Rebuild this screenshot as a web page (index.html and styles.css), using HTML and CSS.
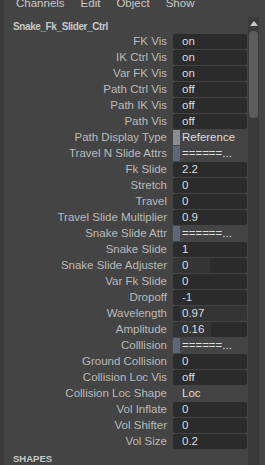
FILE: index.html
```html
<!DOCTYPE html>
<html lang="en">
<head>
<meta charset="UTF-8">
<title>Channel Box</title>
<link rel="stylesheet" href="styles.css">
</head>
<body>
<div class="window">
  <div class="edge"></div>
  <div class="main">
    <div class="menubar">
      <span>Channels</span>
      <span>Edit</span>
      <span>Object</span>
      <span>Show</span>
    </div>
    <div class="panel">
      <div class="content">
        <div class="node">Snake_Fk_Slider_Ctrl</div>
        <div class="attrs">
          <div class="row"><span class="label">FK Vis</span><span class="field">on</span></div>
          <div class="row"><span class="label">IK Ctrl Vis</span><span class="field">on</span></div>
          <div class="row"><span class="label">Var FK Vis</span><span class="field">on</span></div>
          <div class="row"><span class="label">Path Ctrl Vis</span><span class="field">off</span></div>
          <div class="row"><span class="label">Path IK Vis</span><span class="field">off</span></div>
          <div class="row"><span class="label">Path Vis</span><span class="field">off</span></div>
          <div class="row"><span class="label">Path Display Type</span><span class="enum"><i class="swatch gray"></i>Reference</span></div>
          <div class="row"><span class="label">Travel N Slide Attrs</span><span class="enum"><i class="swatch blue"></i>======...</span></div>
          <div class="row"><span class="label">Fk Slide</span><span class="field">2.2</span></div>
          <div class="row"><span class="label">Stretch</span><span class="field">0</span></div>
          <div class="row"><span class="label">Travel</span><span class="field">0</span></div>
          <div class="row"><span class="label">Travel Slide Multiplier</span><span class="field">0.9</span></div>
          <div class="row"><span class="label">Snake Slide Attr</span><span class="enum"><i class="swatch blue"></i>======...</span></div>
          <div class="row"><span class="label">Snake Slide</span><span class="field">1</span></div>
          <div class="row"><span class="label">Snake Slide Adjuster</span><span class="field"><span class="fill" style="left: 0; width: 37px"></span><span class="val">0</span></span></div>
          <div class="row"><span class="label">Var Fk Slide</span><span class="field">0</span></div>
          <div class="row"><span class="label">Dropoff</span><span class="field">-1</span></div>
          <div class="row"><span class="label">Wavelength</span><span class="field"><span class="fill" style="left: 7px; width: 67px"></span><span class="val">0.97</span></span></div>
          <div class="row"><span class="label">Amplitude</span><span class="field"><span class="fill" style="left: 0; width: 38px"></span><span class="val">0.16</span></span></div>
          <div class="row"><span class="label">Colllision</span><span class="enum"><i class="swatch blue"></i>======...</span></div>
          <div class="row"><span class="label">Ground Collision</span><span class="field">0</span></div>
          <div class="row"><span class="label">Collision Loc Vis</span><span class="field">off</span></div>
          <div class="row"><span class="label">Collision Loc Shape</span><span class="enum plain">Loc</span></div>
          <div class="row"><span class="label">Vol Inflate</span><span class="field">0</span></div>
          <div class="row"><span class="label">Vol Shifter</span><span class="field">0</span></div>
          <div class="row"><span class="label">Vol Size</span><span class="field">0.2</span></div>
        </div>
        <div class="section">SHAPES</div>
      </div>
      <div class="scrollbar">
        <div class="arrow"></div>
        <div class="thumb"></div>
      </div>
    </div>
  </div>
</div>
</body>
</html>
```

FILE: styles.css
```css
body {
  margin: 0;
  background-color: #444444;
  font-family: "Liberation Sans", Arial, sans-serif;
  overflow: hidden;
}

.window {
  display: flex;
  width: 265px;
  height: 465px;
  background-color: #444444;
}

.edge {
  width: 4px;
  background-color: #3a3a3a;
}

.main {
  flex: 1;
  display: flex;
  flex-direction: column;
}

.menubar {
  display: flex;
  gap: 16px;
  height: 17px;
  padding-left: 12px;
  font-size: 11.5px;
  line-height: 7px;
  color: #c8c8c8;
  overflow: hidden;
}

.panel {
  display: flex;
  flex: 1;
}

.content {
  flex: 1;
}

.node {
  padding: 3px 0 0 9px;
  height: 14px;
  font-size: 10px;
  line-height: 14px;
  font-weight: bold;
  letter-spacing: -0.4px;
  color: #c8c8c8;
}

.attrs {
  display: flex;
  flex-direction: column;
  gap: 1px;
}

.row {
  display: grid;
  grid-template-columns: 1fr 74px;
  column-gap: 6px;
  height: 15px;
  font-size: 11.5px;
  line-height: 15px;
}

.label {
  text-align: right;
  color: #bababa;
  white-space: nowrap;
}

.field {
  position: relative;
  padding-left: 9px;
  background-color: #2b2b2b;
  border-radius: 2px;
  color: #dcdcdc;
  overflow: hidden;
}

.fill {
  position: absolute;
  top: 0;
  bottom: 0;
  background-color: #343434;
}

.val {
  position: relative;
}

.enum {
  display: flex;
  align-items: stretch;
  color: #dcdcdc;
  white-space: nowrap;
}

.enum.plain {
  padding-left: 9px;
}

.swatch {
  width: 7px;
  margin-right: 2px;
}

.swatch.gray {
  background-color: #8c8c8c;
}

.swatch.blue {
  background-color: #5c6875;
}

.section {
  margin-top: 4px;
  padding-left: 9px;
  font-size: 9.5px;
  line-height: 12px;
  font-weight: bold;
  color: #c8c8c8;
}

.scrollbar {
  display: flex;
  flex-direction: column;
  align-items: center;
  width: 11px;
  margin: 0 6px 0 1px;
  background-color: #3a3a3a;
}

.arrow {
  margin-top: 4px;
  width: 0;
  height: 0;
  border-left: 4px solid transparent;
  border-right: 4px solid transparent;
  border-bottom: 5px solid #c8c8c8;
}

.thumb {
  margin-top: 5px;
  width: 9px;
  height: 87px;
  background-color: #5d5d5d;
  border-radius: 4px;
}
```
